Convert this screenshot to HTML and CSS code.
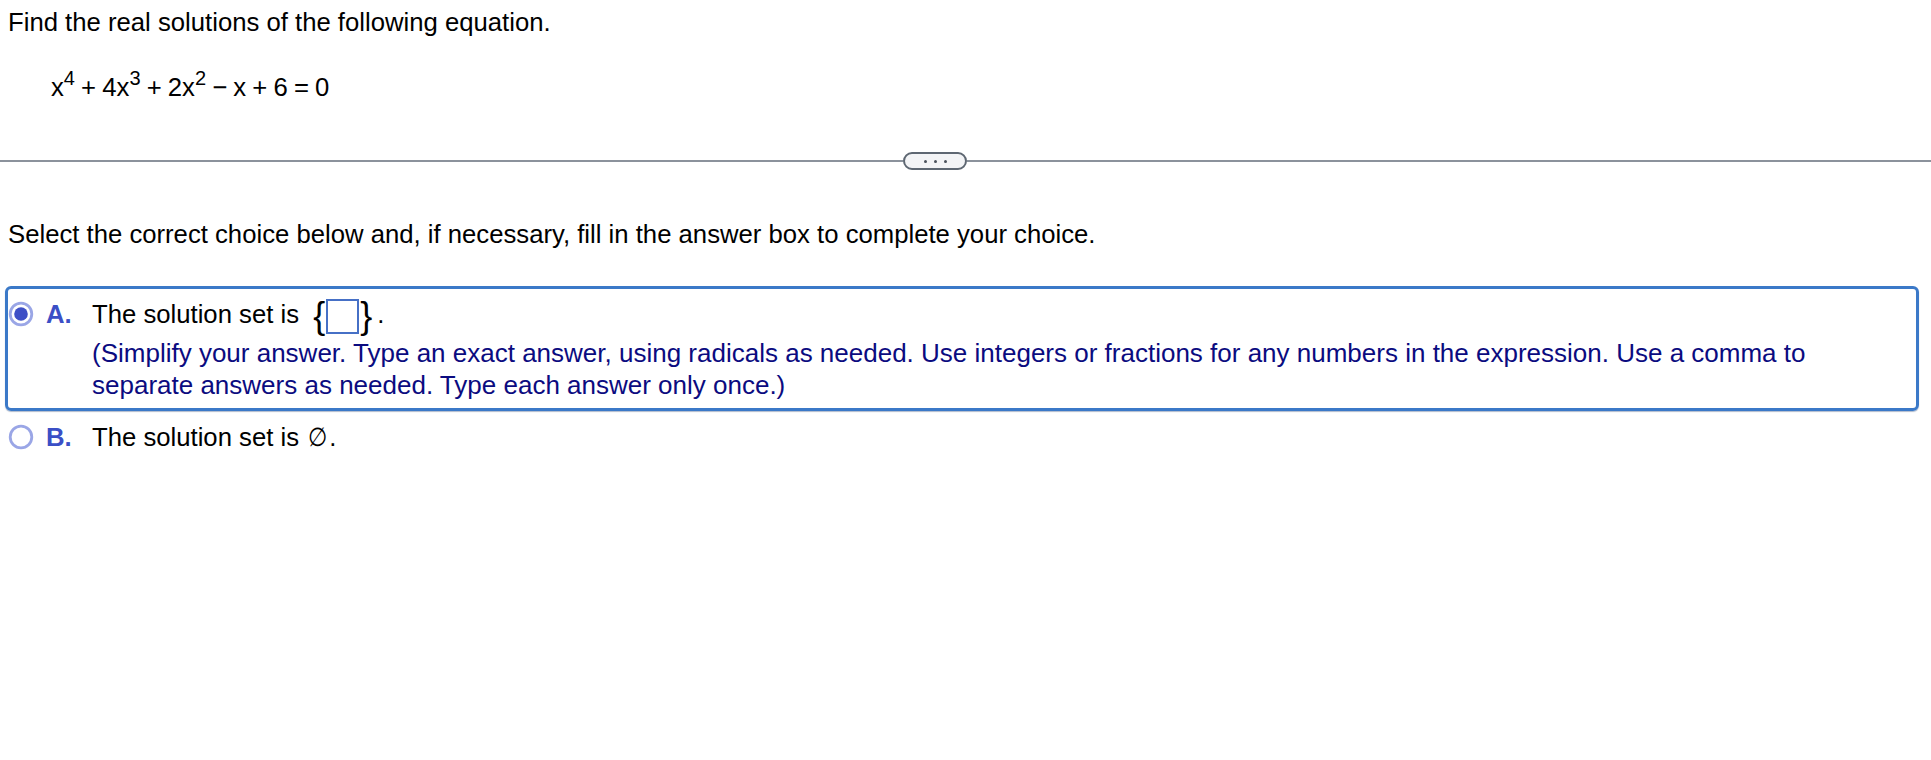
FILE: index.html
```html
<!DOCTYPE html>
<html>
<head>
<meta charset="utf-8">
<link rel="stylesheet" href="styles.css">
</head>
<body>
<div class="page">
  <div class="question">Find the real solutions of the following equation.</div>
  <div class="equation">x<sup class="exp">4</sup> + 4x<sup class="exp">3</sup> + 2x<sup class="exp">2</sup> − x + 6 = 0</div>
  <div class="separator">
    <div class="sep-line sep-left"></div>
    <div class="sep-btn"><span class="dot"></span><span class="dot"></span><span class="dot"></span></div>
    <div class="sep-line sep-right"></div>
  </div>
  <div class="instruction">Select the correct choice below and, if necessary, fill in the answer box to complete your choice.</div>
  <div class="choices">
    <div class="choice selected">
      <svg class="radio" width="26" height="26" viewBox="0 0 26 26">
        <circle cx="13" cy="13" r="10.8" fill="#fff" stroke="#9aa6e6" stroke-width="2.8"/>
        <circle cx="13" cy="13" r="6.8" fill="#3e4fc6"/>
      </svg>
      <div class="label">A.</div>
      <div class="body">
        <div class="line1">The solution set is <span class="brace">{</span><span class="answer-box"></span><span class="brace">}</span>.</div>
        <div class="hint">(Simplify your answer. Type an exact answer, using radicals as needed. Use integers or fractions for any numbers in the expression. Use a comma to separate answers as needed. Type each answer only once.)</div>
      </div>
    </div>
    <div class="choice">
      <svg class="radio" width="26" height="26" viewBox="0 0 26 26">
        <circle cx="13" cy="13" r="10.8" fill="#fff" stroke="#9aa6e6" stroke-width="2.8"/>
      </svg>
      <div class="label">B.</div>
      <div class="body">The solution set is <span class="empty">∅</span>.</div>
    </div>
  </div>
</div>
</body>
</html>
```
FILE: styles.css
```css
html, body {
  margin: 0;
  padding: 0;
  background: #ffffff;
}
.page {
  font-family: "Liberation Sans", Arial, sans-serif;
  font-size: 25.7px;
  line-height: 32px;
  color: #000;
  padding-top: 6px;
}
.question {
  padding-left: 8px;
}
.equation {
  margin-top: 33px;
  padding-left: 51px;
  white-space: nowrap;
  word-spacing: -1px;
}
.exp {
  font-size: 0.78em;
  vertical-align: 0.56em;
  line-height: 0;
}
.separator {
  margin-top: 49px;
  height: 18px;
  display: flex;
  align-items: center;
}
.sep-line {
  height: 2px;
  background: #8b929c;
}
.sep-left {
  flex: 903 1 0;
}
.sep-right {
  flex: 964 1 0;
}
.sep-btn {
  box-sizing: border-box;
  width: 64px;
  height: 18px;
  border: 2px solid #5e6772;
  border-radius: 9px;
  background: #f3f4f6;
  display: flex;
  align-items: center;
  justify-content: center;
  gap: 7px;
}
.dot {
  width: 3px;
  height: 3px;
  border-radius: 50%;
  background: #4b525c;
}
.instruction {
  margin-top: 48px;
  padding-left: 8px;
}
.choices {
  margin: 36px 12px 0 5px;
}
.choice {
  display: grid;
  grid-template-columns: 38px 46px 1fr;
  align-items: baseline;
  border: 3px solid transparent;
  border-radius: 6px;
  margin-top: 7px;
}
.choice.selected {
  margin-top: 0;
  border-color: #3b79c8;
  padding: 9px 30px 7px 0;
  box-shadow: 0 1px 1px rgba(30, 60, 110, 0.35);
}
.radio {
  align-self: start;
  margin-top: 3px;
  display: block;
}
.label {
  font-weight: bold;
  color: #3b4fc6;
}
.line1 {
  white-space: nowrap;
  min-height: 39px;
}
.brace {
  font-size: 36px;
  font-weight: normal;
  vertical-align: middle;
  line-height: 0;
  margin-left: 7px;
}
.brace + .answer-box {
  margin-left: 1px;
}
.answer-box + .brace {
  margin-left: 1px;
  margin-right: 5px;
}
.answer-box {
  display: inline-block;
  box-sizing: border-box;
  width: 33px;
  height: 35px;
  border: 2px solid #4670c6;
  vertical-align: middle;
  background: #fff;
}
.hint {
  color: #0b0b80;
  font-size: 26px;
}
.empty {
  display: inline-block;
  transform: scaleX(0.85);
}
```
